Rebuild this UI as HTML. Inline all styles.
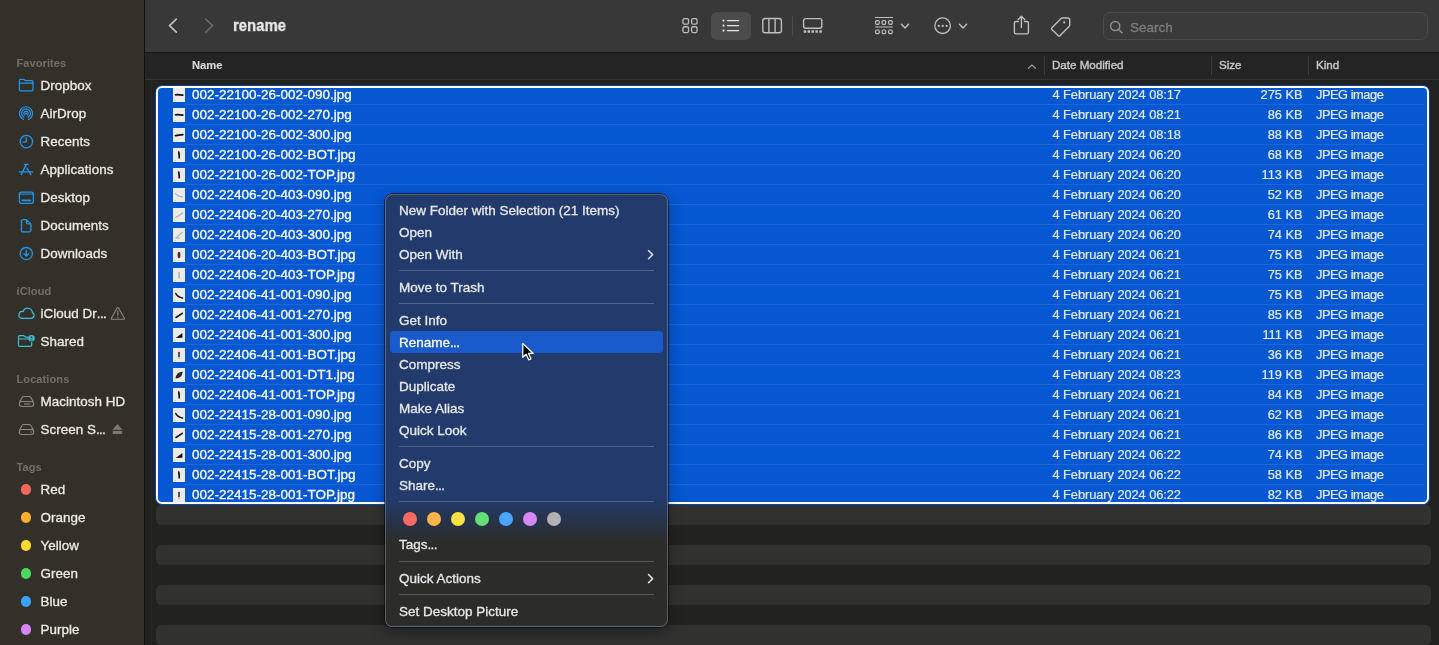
<!DOCTYPE html>
<html><head><meta charset="utf-8"><style>
*{margin:0;padding:0;box-sizing:border-box}
html,body{width:1439px;height:645px;overflow:hidden;background:#222;font-family:"Liberation Sans",sans-serif}
body>*{will-change:transform}
.ell{letter-spacing:-0.7px}
.row,.mi,.sl,.title,.hc,.search{-webkit-text-stroke:0.3px currentColor}
#side{position:absolute;left:0;top:0;width:144px;height:645px;background:#33302a}
#sideb{position:absolute;left:144px;top:0;width:1px;height:645px;background:#111}
.sh{position:absolute;left:16.5px;font-size:11px;font-weight:bold;color:#736f69;letter-spacing:0.1px;line-height:16px;white-space:nowrap}
.si{position:absolute;left:0;width:144px;height:20px}
.sic{position:absolute;left:16px;top:0}
.sl{position:absolute;left:40.5px;top:3px;font-size:13.4px;line-height:16px;color:#ecebe7;letter-spacing:0.06px;white-space:nowrap}
.tdot{position:absolute;left:20.9px;top:5.3px;width:10.4px;height:10.4px;border-radius:50%}
#tb{position:absolute;left:145px;top:0;width:1294px;height:52px;background:#383838}
#tbb{position:absolute;left:145px;top:52px;width:1294px;height:1px;background:#1a1a1a}
.title{position:absolute;left:232.7px;top:16px;font-size:17px;font-weight:bold;color:#ececec;line-height:20px;transform:scaleX(0.875);transform-origin:0 0}
.search{position:absolute;left:1130px;top:20px;font-size:13.5px;color:#7e7e7e;line-height:16px}
#hdr{position:absolute;left:145px;top:53px;width:1294px;height:26px;background:#242424}
#hdrb{position:absolute;left:145px;top:79px;width:1294px;height:1.5px;background:#363636}
.hc{position:absolute;top:58px;font-size:11.6px;color:#c8c8c8;line-height:14px;-webkit-text-stroke:0.4px currentColor}
.hsep{position:absolute;top:56px;width:1px;height:19px;background:#3a3a3a}
#list{position:absolute;left:145px;top:80px;width:1294px;height:565px;background:#222221}
.stripe{position:absolute;left:155.5px;width:1274.5px;height:20px;background:#31312f;border-radius:5px}
#sel{position:absolute;left:156px;top:86px;width:1273px;height:418px;background:#0657d2;border:2px solid #fff;border-radius:6px;box-shadow:0 0 0 1px #0a3f9e}
.rsep{position:absolute;left:185px;width:1239px;height:1px;background:#1c66d8}
.row{position:absolute;left:0;width:1439px;height:20px;color:#fff;font-size:13.5px;line-height:20px;white-space:nowrap}
.th{position:absolute;left:173px;top:4px;filter:drop-shadow(0 0.5px 0.5px rgba(0,0,0,0.35))}
.fn{position:absolute;left:192px;top:1px}
.dt{position:absolute;left:1052.5px;top:1px;font-size:12.8px;letter-spacing:-0.05px;color:#e6ecf8;-webkit-text-stroke:0.2px currentColor}
.sz{position:absolute;right:136.5px;top:1px;font-size:12.8px;color:#e6ecf8;-webkit-text-stroke:0.2px currentColor}
.kd{position:absolute;left:1316px;top:1px;font-size:12.8px;letter-spacing:-0.45px;color:#e6ecf8;-webkit-text-stroke:0.2px currentColor}
#menu{position:absolute;left:385px;top:194px;width:283px;height:433px;border-radius:7px;border:1px solid rgba(255,255,255,0.24);
 background:linear-gradient(to bottom,#223b6c 0px,#223b6c 303px,#2c2c2a 347px,#2c2c29 433px);box-shadow:0 0 0 0.5px #000,0 5px 14px rgba(0,0,0,0.35)}
.mi{position:absolute;left:13px;width:260px;height:22px;line-height:22px;font-size:13.5px;color:#e8e8ea;white-space:nowrap}
.ms{position:absolute;left:13px;width:255px;height:1px;background:rgba(255,255,255,0.2)}
.mhl{position:absolute;left:4px;top:136px;width:273px;height:22px;border-radius:4px;background:#1a5bcc}
.mdot{position:absolute;top:317px;width:14px;height:14px;border-radius:50%}
</style></head><body>
<div id="side"><div class="sh" style="top:55px">Favorites</div><div class="si" style="top:75px"><svg class="sic" width="20" height="20" viewBox="0 0 20 20"><path d="M3.4 14.4 V5.6 Q3.4 4.4 4.6 4.4 H7.4 Q8 4.4 8.5 4.9 L9.3 5.7 H15.8 Q17 5.7 17 6.9 V14.6 Q17 15.8 15.8 15.8 H4.8 Q3.4 15.8 3.4 14.4 Z M3.4 8.1 H17" fill="none" stroke="#2196f0" stroke-width="1.25" stroke-linejoin="round"/></svg><span class="sl">Dropbox</span></div><div class="si" style="top:103px"><svg class="sic" width="20" height="20" viewBox="0 0 20 20"><g fill="none" stroke="#2196f0" stroke-width="1.2" stroke-linecap="round"><path d="M7.4 16.4 A6.6 6.6 0 1 1 12.6 16.4"/><path d="M7.9 14.1 A4.4 4.4 0 1 1 12.1 14.1"/><path d="M8.6 12 A2.2 2.2 0 1 1 11.4 12"/></g><circle cx="10" cy="10.6" r="1.1" fill="#2196f0"/></svg><span class="sl">AirDrop</span></div><div class="si" style="top:131px"><svg class="sic" width="20" height="20" viewBox="0 0 20 20"><circle cx="10.4" cy="10.6" r="6.2" fill="none" stroke="#2196f0" stroke-width="1.3"/><path d="M10.3 6.6 V10.8 H7" fill="none" stroke="#2196f0" stroke-width="1.3" stroke-linecap="round" stroke-linejoin="round"/></svg><span class="sl">Recents</span></div><div class="si" style="top:159px"><svg class="sic" width="20" height="20" viewBox="0 0 20 20"><g fill="none" stroke="#2196f0" stroke-width="1.4" stroke-linecap="round"><path d="M8.4 5.4 H12"/><path d="M10.2 5.6 L5.3 15.5"/><path d="M10.9 9 L14.8 15.7"/><path d="M3.4 12.9 H16.5"/></g></svg><span class="sl">Applications</span></div><div class="si" style="top:187px"><svg class="sic" width="20" height="20" viewBox="0 0 20 20"><rect x="3.4" y="5.2" width="14" height="11.1" rx="2" fill="none" stroke="#2196f0" stroke-width="1.25"/><path d="M3.6 7.1 H17.2" stroke="#2196f0" stroke-width="1"/><path d="M6.3 13.4 H14.6" stroke="#2196f0" stroke-width="1.6" stroke-linecap="round"/></svg><span class="sl">Desktop</span></div><div class="si" style="top:215px"><svg class="sic" width="20" height="20" viewBox="0 0 20 20"><path d="M7 4.6 H10.6 L14.9 8.9 V15.4 Q14.9 16.9 13.4 16.9 H7 Q5.5 16.9 5.5 15.4 V6.1 Q5.5 4.6 7 4.6 Z M10.5 4.8 V7.5 Q10.5 8.9 11.9 8.9 H14.7" fill="none" stroke="#2196f0" stroke-width="1.3" stroke-linejoin="round"/></svg><span class="sl">Documents</span></div><div class="si" style="top:243px"><svg class="sic" width="20" height="20" viewBox="0 0 20 20"><circle cx="10.3" cy="10.6" r="6.1" fill="none" stroke="#2196f0" stroke-width="1.3"/><path d="M10.3 7.4 V13 M7.9 10.7 L10.3 13.1 L12.7 10.7" fill="none" stroke="#2196f0" stroke-width="1.3" stroke-linecap="round" stroke-linejoin="round"/></svg><span class="sl">Downloads</span></div><div class="sh" style="top:283px">iCloud</div><div class="si" style="top:303px"><svg class="sic" width="20" height="20" viewBox="0 0 20 20"><path d="M5.6 15.3 H15 A3 3 0 0 0 16.4 9.6 A4.7 4.7 0 0 0 7.2 8.6 A3.3 3.3 0 0 0 5.6 15.3 Z" fill="none" stroke="#3cbfd6" stroke-width="1.2" stroke-linejoin="round"/></svg><span class="sl">iCloud Dr<span class="ell">...</span></span><svg width="16" height="16" viewBox="0 0 16 16" style="position:absolute;left:110px;top:2px"><path d="M7.85 2.6 Q8.3 2.6 8.6 3.1 L14.4 13.3 Q14.7 14.2 13.8 14.3 H1.9 Q1 14.2 1.3 13.3 L7.1 3.1 Q7.4 2.6 7.85 2.6 Z" fill="none" stroke="#8c8882" stroke-width="1.1" stroke-linejoin="round"/><path d="M7.85 5.8 V10.6" stroke="#8c8882" stroke-width="1.1" stroke-linecap="round"/><circle cx="7.85" cy="12.3" r="0.65" fill="#8c8882"/></svg></div><div class="si" style="top:331px"><svg class="sic" width="20" height="20" viewBox="0 0 20 20"><path d="M12 6.2 H9.5 L8.4 5.1 Q8 4.7 7.4 4.7 H3.9 Q2.5 4.7 2.5 6.1 V14 Q2.5 15.4 3.9 15.4 H14.3 Q15.7 15.4 15.7 14 V11.4 M2.5 8 H12.2" fill="none" stroke="#3cbfd6" stroke-width="1.2" stroke-linejoin="round" stroke-linecap="round"/><circle cx="15.5" cy="7.3" r="3.2" fill="#3cbfd6"/><circle cx="15.5" cy="6.3" r="0.95" fill="#33302b"/><path d="M13.9 9.6 Q14.2 7.9 15.5 7.9 Q16.8 7.9 17.1 9.6 Z" fill="#2e6d78"/></svg><span class="sl">Shared</span></div><div class="sh" style="top:371px">Locations</div><div class="si" style="top:391px"><svg class="sic" width="20" height="20" viewBox="0 0 20 20"><path d="M3.6 11 L6.3 6.3 Q6.8 5.5 7.8 5.5 H13.2 Q14.2 5.5 14.7 6.3 L17.4 11" fill="none" stroke="#8c8882" stroke-width="1.1"/><rect x="3.3" y="10.5" width="14.4" height="5" rx="2.5" fill="none" stroke="#8c8882" stroke-width="1.1"/><path d="M8.2 13 H14.6" stroke="#8c8882" stroke-width="1.3" stroke-dasharray="1.1 0.4"/></svg><span class="sl">Macintosh HD</span></div><div class="si" style="top:419px"><svg class="sic" width="20" height="20" viewBox="0 0 20 20"><path d="M3.6 11 L6.3 6.3 Q6.8 5.5 7.8 5.5 H13.2 Q14.2 5.5 14.7 6.3 L17.4 11" fill="none" stroke="#8c8882" stroke-width="1.1"/><rect x="3.3" y="10.5" width="14.4" height="5" rx="2.5" fill="none" stroke="#8c8882" stroke-width="1.1"/><circle cx="15" cy="13" r="0.75" fill="#8c8882"/></svg><span class="sl">Screen S<span class="ell">...</span></span><svg width="12" height="12" viewBox="0 0 12 12" style="position:absolute;left:112px;top:4px"><path d="M5.45 1.3 L10.2 6.8 H0.7 Z" fill="#7b7771" stroke="#7b7771" stroke-width="0.4" stroke-linejoin="round"/><rect x="0.7" y="8.1" width="9.5" height="2.8" rx="0.4" fill="#7b7771"/></svg></div><div class="sh" style="top:459px">Tags</div><div class="si" style="top:479px"><span class="tdot" style="background:#fd675e"></span><span class="sl">Red</span></div><div class="si" style="top:507px"><span class="tdot" style="background:#fcae2c"></span><span class="sl">Orange</span></div><div class="si" style="top:535px"><span class="tdot" style="background:#fcdc2e"></span><span class="sl">Yellow</span></div><div class="si" style="top:563px"><span class="tdot" style="background:#4fd860"></span><span class="sl">Green</span></div><div class="si" style="top:591px"><span class="tdot" style="background:#3ba2fb"></span><span class="sl">Blue</span></div><div class="si" style="top:619px"><span class="tdot" style="background:#d884f5"></span><span class="sl">Purple</span></div></div>
<div id="sideb"></div>
<div id="tb"></div>
<div id="tbb"></div>

<svg style="position:absolute;left:0;top:0" width="1439" height="52" viewBox="0 0 1439 52">
 <g fill="none" stroke="#c2c2c2" stroke-width="1.6" stroke-linecap="round" stroke-linejoin="round">
  <path d="M176.3 19.2 L169.5 25.6 L176.3 32.1"/>
 </g>
 <g fill="none" stroke="#686868" stroke-width="1.6" stroke-linecap="round" stroke-linejoin="round">
  <path d="M205.8 19.2 L212.6 25.6 L205.8 32.1"/>
 </g>
 <rect x="711" y="12" width="40" height="28" rx="6" fill="#4b4b4b"/>
 <g fill="none" stroke="#bebebe" stroke-width="1.3">
  <rect x="682.95" y="18.55" width="5.6" height="5.6" rx="1.5"/>
  <rect x="691.65" y="18.55" width="5.4" height="5.6" rx="1.5"/>
  <rect x="682.95" y="26.75" width="5.6" height="5.8" rx="1.5"/>
  <rect x="691.65" y="26.75" width="5.4" height="5.8" rx="1.5"/>
 </g>
 <g fill="#e6e6e6">
  <circle cx="723.5" cy="20.6" r="1.1"/><circle cx="723.5" cy="25.6" r="1.1"/><circle cx="723.5" cy="30.6" r="1.1"/>
 </g>
 <g stroke="#e6e6e6" stroke-width="1.4" stroke-linecap="round">
  <path d="M727.5 20.6 H738.5 M727.5 25.6 H738.5 M727.5 30.6 H738.5"/>
 </g>
 <g fill="none" stroke="#bebebe" stroke-width="1.4">
  <rect x="762.8" y="18.5" width="18.6" height="14.3" rx="2.2"/>
  <path d="M768.9 18.5 V32.8 M775.1 18.5 V32.8"/>
 </g>
 <path d="M792.6 16.5 V35.5" stroke="#4e4e4e" stroke-width="1"/>
 <g fill="none" stroke="#bebebe" stroke-width="1.4">
  <rect x="803.6" y="18.6" width="18.2" height="9.6" rx="2"/>
 </g>
 <g fill="#bebebe">
  <rect x="803.7" y="30.3" width="2.5" height="2.5" rx="0.3"/><rect x="807.6" y="30.3" width="2.5" height="2.5" rx="0.3"/><rect x="811.5" y="30.3" width="2.5" height="2.5" rx="0.3"/><rect x="815.4" y="30.3" width="2.5" height="2.5" rx="0.3"/><rect x="819.4" y="30.3" width="2.5" height="2.5" rx="0.3"/>
 </g>
 <path d="M875 17.4 H893 M875 26.9 H893" stroke="#bebebe" stroke-width="1.05" fill="none"/>
 <g fill="none" stroke="#bebebe" stroke-width="1.2">
  <rect x="875.6" y="20.6" width="3.6" height="3.7" rx="1"/><rect x="882.1" y="20.6" width="3.6" height="3.7" rx="1"/><rect x="888.6" y="20.6" width="3.6" height="3.7" rx="1"/>
  <rect x="875.6" y="30" width="3.6" height="3.6" rx="1"/><rect x="882.1" y="30" width="3.6" height="3.6" rx="1"/><rect x="888.6" y="30" width="3.6" height="3.6" rx="1"/>
 </g>
 <g fill="none" stroke="#bebebe" stroke-width="1.5" stroke-linecap="round" stroke-linejoin="round">
  <path d="M901.5 24.3 L905 28 L908.5 24.3"/>
  <path d="M959.5 24.3 L963 28 L966.5 24.3"/>
 </g>
 <circle cx="942.6" cy="25.7" r="7.8" fill="none" stroke="#bebebe" stroke-width="1.3"/>
 <g fill="#bebebe"><circle cx="938.8" cy="25.9" r="1.15"/><circle cx="942.7" cy="25.9" r="1.15"/><circle cx="946.6" cy="25.9" r="1.15"/></g>
 <g fill="none" stroke="#bebebe" stroke-width="1.4" stroke-linecap="round" stroke-linejoin="round">
  <path d="M1018.3 21.5 H1016 Q1014.4 21.5 1014.4 23.1 V32.3 Q1014.4 33.9 1016 33.9 H1026.8 Q1028.4 33.9 1028.4 32.3 V23.1 Q1028.4 21.5 1026.8 21.5 H1024.5"/>
  <path d="M1021.4 27.5 V16.4 M1018.2 19.4 L1021.4 16.2 L1024.6 19.4"/>
 </g>
 <g fill="none" stroke="#bebebe" stroke-width="1.4" stroke-linejoin="round" transform="translate(0.3 0.8)">
  <path d="M1062.2 17.2 H1067.4 Q1069.4 17.2 1069.4 19.2 V24.4 Q1069.4 25.2 1068.8 25.8 L1059.6 35 Q1058.8 35.8 1058 35 L1051.6 28.6 Q1050.8 27.8 1051.6 27 L1060.8 17.8 Q1061.4 17.2 1062.2 17.2 Z"/>
 </g>
 <circle cx="1064.2" cy="22.4" r="1.1" fill="#bebebe"/>
 <rect x="1103.5" y="12.5" width="324" height="27" rx="6.5" fill="#3a3a3a" stroke="#4c4c4c" stroke-width="1"/>
 <g fill="none" stroke="#8f8f8f" stroke-width="1.5" stroke-linecap="round">
  <circle cx="1115.2" cy="26" r="4.6"/>
  <path d="M1118.6 29.4 L1122 32.8"/>
 </g>
</svg>
<div class="title">rename</div>
<div class="search">Search</div>
<div id="hdr"></div>
<div id="hdrb"></div>
<div class="hc" style="left:192px;font-weight:bold;font-size:11.2px;color:#dcdcdc;-webkit-text-stroke:0.1px currentColor">Name</div>
<svg width="10" height="8" viewBox="0 0 10 8" style="position:absolute;left:1027px;top:62.5px"><path d="M1.5 5.3 L4.95 1.9 L8.4 5.3" fill="none" stroke="#9a9a9a" stroke-width="1.3" stroke-linecap="round" stroke-linejoin="round"/></svg>
<div class="hsep" style="left:1044px"></div>
<div class="hc" style="left:1052px">Date Modified</div>
<div class="hsep" style="left:1211px"></div>
<div class="hc" style="left:1219px">Size</div>
<div class="hsep" style="left:1308px"></div>
<div class="hc" style="left:1316px">Kind</div>
<div id="list"></div>
<div class="stripe" style="top:505px"></div><div class="stripe" style="top:545px"></div><div class="stripe" style="top:585px"></div><div class="stripe" style="top:625px"></div>
<div id="sel"></div>
<div class="row" style="top:84px"><svg class="th" width="12" height="14" viewBox="0 0 12 14"><rect x="0" y="0" width="12" height="14" fill="#ecebe9"/><path d="M2.5 6.8 Q6 6.5 9.8 7.2" stroke="#111" stroke-width="1.7" stroke-linecap="round" fill="none"/></svg><span class="fn">002-22100-26-002-090.jpg</span><span class="dt">4 February 2024 08:17</span><span class="sz">275 KB</span><span class="kd">JPEG image</span></div><div class="rsep" style="top:104px"></div><div class="row" style="top:104px"><svg class="th" width="12" height="14" viewBox="0 0 12 14"><rect x="0" y="0" width="12" height="14" fill="#ecebe9"/><path d="M2.5 6.8 Q6 6.5 9.8 7.2" stroke="#111" stroke-width="1.7" stroke-linecap="round" fill="none"/></svg><span class="fn">002-22100-26-002-270.jpg</span><span class="dt">4 February 2024 08:21</span><span class="sz">86 KB</span><span class="kd">JPEG image</span></div><div class="rsep" style="top:124px"></div><div class="row" style="top:124px"><svg class="th" width="12" height="14" viewBox="0 0 12 14"><rect x="0" y="0" width="12" height="14" fill="#ecebe9"/><path d="M2.5 7.6 Q6 7.2 9.8 6.6" stroke="#111" stroke-width="1.8" stroke-linecap="round" fill="none"/></svg><span class="fn">002-22100-26-002-300.jpg</span><span class="dt">4 February 2024 08:18</span><span class="sz">88 KB</span><span class="kd">JPEG image</span></div><div class="rsep" style="top:144px"></div><div class="row" style="top:144px"><svg class="th" width="12" height="14" viewBox="0 0 12 14"><rect x="0" y="0" width="12" height="14" fill="#ecebe9"/><path d="M5.8 4.2 Q6.3 7 6.2 9.8" stroke="#151515" stroke-width="1.7" stroke-linecap="round" fill="none"/></svg><span class="fn">002-22100-26-002-BOT.jpg</span><span class="dt">4 February 2024 06:20</span><span class="sz">68 KB</span><span class="kd">JPEG image</span></div><div class="rsep" style="top:164px"></div><div class="row" style="top:164px"><svg class="th" width="12" height="14" viewBox="0 0 12 14"><rect x="0" y="0" width="12" height="14" fill="#ecebe9"/><path d="M5.8 4.2 Q6.3 7 6.2 9.8" stroke="#151515" stroke-width="1.7" stroke-linecap="round" fill="none"/></svg><span class="fn">002-22100-26-002-TOP.jpg</span><span class="dt">4 February 2024 06:20</span><span class="sz">113 KB</span><span class="kd">JPEG image</span></div><div class="rsep" style="top:184px"></div><div class="row" style="top:184px"><svg class="th" width="12" height="14" viewBox="0 0 12 14"><rect x="0" y="0" width="12" height="14" fill="#ecebe9"/><path d="M2.5 5.5 Q4.5 8.5 9.5 8.8" stroke="#b5b0aa" stroke-width="1.3" stroke-linecap="round" fill="none"/></svg><span class="fn">002-22406-20-403-090.jpg</span><span class="dt">4 February 2024 06:20</span><span class="sz">52 KB</span><span class="kd">JPEG image</span></div><div class="rsep" style="top:204px"></div><div class="row" style="top:204px"><svg class="th" width="12" height="14" viewBox="0 0 12 14"><rect x="0" y="0" width="12" height="14" fill="#ecebe9"/><path d="M2.5 9.5 Q6 8 9.5 5" stroke="#b8b3ad" stroke-width="1.3" stroke-linecap="round" fill="none"/></svg><span class="fn">002-22406-20-403-270.jpg</span><span class="dt">4 February 2024 06:20</span><span class="sz">61 KB</span><span class="kd">JPEG image</span></div><div class="rsep" style="top:224px"></div><div class="row" style="top:224px"><svg class="th" width="12" height="14" viewBox="0 0 12 14"><rect x="0" y="0" width="12" height="14" fill="#ecebe9"/><path d="M3 10 L9 4.5 M3.5 10 H6.5" stroke="#b5b0aa" stroke-width="1.2" stroke-linecap="round" fill="none"/></svg><span class="fn">002-22406-20-403-300.jpg</span><span class="dt">4 February 2024 06:20</span><span class="sz">74 KB</span><span class="kd">JPEG image</span></div><div class="rsep" style="top:244px"></div><div class="row" style="top:244px"><svg class="th" width="12" height="14" viewBox="0 0 12 14"><rect x="0" y="0" width="12" height="14" fill="#ecebe9"/><ellipse cx="6" cy="7" rx="1.4" ry="3.2" fill="#4a3222"/></svg><span class="fn">002-22406-20-403-BOT.jpg</span><span class="dt">4 February 2024 06:21</span><span class="sz">75 KB</span><span class="kd">JPEG image</span></div><div class="rsep" style="top:264px"></div><div class="row" style="top:264px"><svg class="th" width="12" height="14" viewBox="0 0 12 14"><rect x="0" y="0" width="12" height="14" fill="#ecebe9"/><path d="M6 4.5 Q6.4 7 6 9.8" stroke="#a9a39c" stroke-width="1.3" stroke-linecap="round" fill="none"/></svg><span class="fn">002-22406-20-403-TOP.jpg</span><span class="dt">4 February 2024 06:21</span><span class="sz">75 KB</span><span class="kd">JPEG image</span></div><div class="rsep" style="top:284px"></div><div class="row" style="top:284px"><svg class="th" width="12" height="14" viewBox="0 0 12 14"><rect x="0" y="0" width="12" height="14" fill="#ecebe9"/><path d="M2.8 5.5 Q4.5 9 9.5 10" stroke="#111" stroke-width="1.6" stroke-linecap="round" fill="none"/></svg><span class="fn">002-22406-41-001-090.jpg</span><span class="dt">4 February 2024 06:21</span><span class="sz">75 KB</span><span class="kd">JPEG image</span></div><div class="rsep" style="top:304px"></div><div class="row" style="top:304px"><svg class="th" width="12" height="14" viewBox="0 0 12 14"><rect x="0" y="0" width="12" height="14" fill="#ecebe9"/><path d="M3 9.5 L9.3 5.3" stroke="#111" stroke-width="1.6" stroke-linecap="round" fill="none"/></svg><span class="fn">002-22406-41-001-270.jpg</span><span class="dt">4 February 2024 06:21</span><span class="sz">85 KB</span><span class="kd">JPEG image</span></div><div class="rsep" style="top:324px"></div><div class="row" style="top:324px"><svg class="th" width="12" height="14" viewBox="0 0 12 14"><rect x="0" y="0" width="12" height="14" fill="#ecebe9"/><path d="M2.8 10 L9.3 5 L9.5 9.8 Z" fill="#111"/></svg><span class="fn">002-22406-41-001-300.jpg</span><span class="dt">4 February 2024 06:21</span><span class="sz">111 KB</span><span class="kd">JPEG image</span></div><div class="rsep" style="top:344px"></div><div class="row" style="top:344px"><svg class="th" width="12" height="14" viewBox="0 0 12 14"><rect x="0" y="0" width="12" height="14" fill="#ecebe9"/><path d="M6 4.6 L6 8.6" stroke="#222" stroke-width="1.5" stroke-linecap="round"/><circle cx="6" cy="10" r="0.6" fill="#444"/></svg><span class="fn">002-22406-41-001-BOT.jpg</span><span class="dt">4 February 2024 06:21</span><span class="sz">36 KB</span><span class="kd">JPEG image</span></div><div class="rsep" style="top:364px"></div><div class="row" style="top:364px"><svg class="th" width="12" height="14" viewBox="0 0 12 14"><rect x="0" y="0" width="12" height="14" fill="#ecebe9"/><path d="M2.5 10.5 Q3.5 3.5 9.8 3.8 Q9 10.5 2.5 10.5Z" fill="#2a2a2a"/></svg><span class="fn">002-22406-41-001-DT1.jpg</span><span class="dt">4 February 2024 08:23</span><span class="sz">119 KB</span><span class="kd">JPEG image</span></div><div class="rsep" style="top:384px"></div><div class="row" style="top:384px"><svg class="th" width="12" height="14" viewBox="0 0 12 14"><rect x="0" y="0" width="12" height="14" fill="#ecebe9"/><path d="M5.8 4.2 Q6.3 7 6.2 9.8" stroke="#151515" stroke-width="1.7" stroke-linecap="round" fill="none"/></svg><span class="fn">002-22406-41-001-TOP.jpg</span><span class="dt">4 February 2024 06:21</span><span class="sz">84 KB</span><span class="kd">JPEG image</span></div><div class="rsep" style="top:404px"></div><div class="row" style="top:404px"><svg class="th" width="12" height="14" viewBox="0 0 12 14"><rect x="0" y="0" width="12" height="14" fill="#ecebe9"/><path d="M2.8 5.5 Q4.5 9 9.5 10" stroke="#111" stroke-width="1.6" stroke-linecap="round" fill="none"/></svg><span class="fn">002-22415-28-001-090.jpg</span><span class="dt">4 February 2024 06:21</span><span class="sz">62 KB</span><span class="kd">JPEG image</span></div><div class="rsep" style="top:424px"></div><div class="row" style="top:424px"><svg class="th" width="12" height="14" viewBox="0 0 12 14"><rect x="0" y="0" width="12" height="14" fill="#ecebe9"/><path d="M3 9.5 L9.3 5.3" stroke="#111" stroke-width="1.6" stroke-linecap="round" fill="none"/></svg><span class="fn">002-22415-28-001-270.jpg</span><span class="dt">4 February 2024 06:21</span><span class="sz">86 KB</span><span class="kd">JPEG image</span></div><div class="rsep" style="top:444px"></div><div class="row" style="top:444px"><svg class="th" width="12" height="14" viewBox="0 0 12 14"><rect x="0" y="0" width="12" height="14" fill="#ecebe9"/><path d="M2.8 10 L9.3 5 L9.5 9.8 Z" fill="#111"/></svg><span class="fn">002-22415-28-001-300.jpg</span><span class="dt">4 February 2024 06:22</span><span class="sz">74 KB</span><span class="kd">JPEG image</span></div><div class="rsep" style="top:464px"></div><div class="row" style="top:464px"><svg class="th" width="12" height="14" viewBox="0 0 12 14"><rect x="0" y="0" width="12" height="14" fill="#ecebe9"/><path d="M5.8 4.2 Q6.3 7 6.2 9.8" stroke="#151515" stroke-width="1.7" stroke-linecap="round" fill="none"/></svg><span class="fn">002-22415-28-001-BOT.jpg</span><span class="dt">4 February 2024 06:22</span><span class="sz">58 KB</span><span class="kd">JPEG image</span></div><div class="rsep" style="top:484px"></div><div class="row" style="top:484px"><svg class="th" width="12" height="14" viewBox="0 0 12 14"><rect x="0" y="0" width="12" height="14" fill="#ecebe9"/><path d="M6 4.6 L6 8.6" stroke="#222" stroke-width="1.5" stroke-linecap="round"/><circle cx="6" cy="10" r="0.6" fill="#444"/></svg><span class="fn">002-22415-28-001-TOP.jpg</span><span class="dt">4 February 2024 06:22</span><span class="sz">82 KB</span><span class="kd">JPEG image</span></div>
<div id="menu"><div class="mi" style="top:5px">New Folder with Selection (21 Items)</div><div class="mi" style="top:27px">Open</div><div class="mi" style="top:49px">Open With<svg width="8" height="12" viewBox="0 0 8 12" style="position:absolute;left:247.5px;top:5px"><path d="M1.5 1.5 L5.6 5.6 L1.5 9.7" fill="none" stroke="#e0e0e0" stroke-width="1.5" stroke-linecap="round" stroke-linejoin="round"/></svg></div><div class="ms" style="top:75px"></div><div class="mi" style="top:82px">Move to Trash</div><div class="ms" style="top:108px"></div><div class="mi" style="top:115px">Get Info</div><div class="mhl"></div><div class="mi" style="top:137px"><span style="color:#fff">Rename<span class="ell">...</span></span></div><div class="mi" style="top:159px">Compress</div><div class="mi" style="top:181px">Duplicate</div><div class="mi" style="top:203px">Make Alias</div><div class="mi" style="top:225px">Quick Look</div><div class="ms" style="top:251px"></div><div class="mi" style="top:258px">Copy</div><div class="mi" style="top:280px">Share<span class="ell">...</span></div><div class="ms" style="top:306px"></div><span class="mdot" style="left:17px;background:#fd6a62"></span><span class="mdot" style="left:41px;background:#fdb545"></span><span class="mdot" style="left:65px;background:#fde042"></span><span class="mdot" style="left:89px;background:#62e077"></span><span class="mdot" style="left:113px;background:#48a7fd"></span><span class="mdot" style="left:137px;background:#d688f6"></span><span class="mdot" style="left:161px;background:#b1b0b5"></span><div class="mi" style="top:339px">Tags<span class="ell">...</span></div><div class="ms" style="top:366px"></div><div class="mi" style="top:373px">Quick Actions<svg width="8" height="12" viewBox="0 0 8 12" style="position:absolute;left:247.5px;top:5px"><path d="M1.5 1.5 L5.6 5.6 L1.5 9.7" fill="none" stroke="#e0e0e0" stroke-width="1.5" stroke-linecap="round" stroke-linejoin="round"/></svg></div><div class="ms" style="top:399px"></div><div class="mi" style="top:406px">Set Desktop Picture</div></div>
<svg width="14.4" height="19.8" viewBox="0 0 16 22" style="position:absolute;left:521.2px;top:342.3px"><path d="M2 1.5 V17 L5.8 13.6 L8.5 19.8 L11 18.7 L8.4 12.7 H13.6 Z" fill="#000" stroke="#fff" stroke-width="1.4" stroke-linejoin="round"/></svg>
</body></html>
